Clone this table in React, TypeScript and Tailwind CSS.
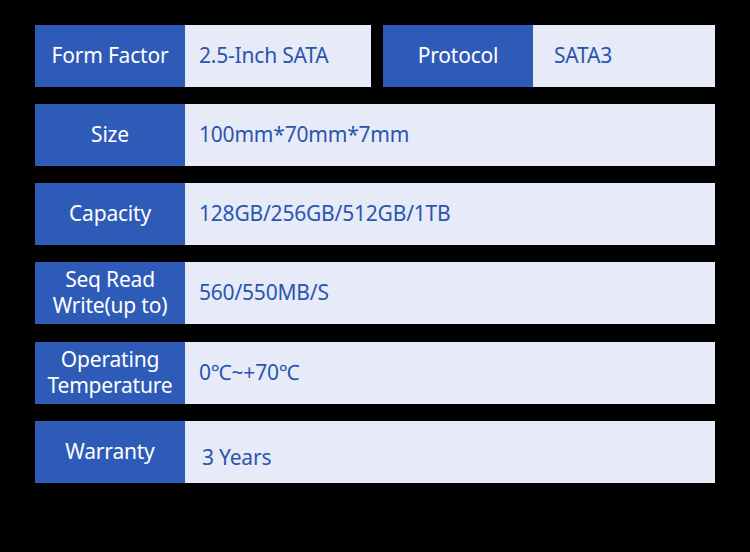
import React from 'react';

const label = 'bg-[#2f5bb8] text-white flex items-center justify-center text-center leading-[26px] pb-[3px]';
const value = 'bg-[#e6ebf7] text-[#2a55b2] flex items-center pl-[14px]';

const rows: { name: React.ReactNode; val: string; extra?: string; gap?: string }[] = [
  { name: 'Size', val: '100mm*70mm*7mm' },
  { name: 'Capacity', val: '128GB/256GB/512GB/1TB' },
  { name: <>Seq Read<br />Write(up to)</>, val: '560/550MB/S' },
  { name: <>Operating<br />Temperature</>, val: '0℃~+70℃', gap: 'mt-[1px]' },
  { name: 'Warranty', val: '3 Years', extra: 'pt-[12px] pl-[17px]' },
];

export default function App() {
  return (
    <div className="w-[750px] h-[552px] bg-black pt-[25px] pl-[35px] text-[21px] tracking-[-0.2px] font-['Noto_Sans',sans-serif]">
      <div className="flex flex-col gap-[17px] w-[680px]">
        <div className="flex h-[62px] gap-[12px]">
          <div className="flex w-[336px]">
            <div className={`${label} w-[150px]`}>Form Factor</div>
            <div className={`${value} flex-1`}>2.5-Inch SATA</div>
          </div>
          <div className="flex flex-1">
            <div className={`${label} w-[150px]`}>Protocol</div>
            <div className={`${value} flex-1 pl-[21px]`}>SATA3</div>
          </div>
        </div>
        {rows.map((r, i) => (
          <div key={i} className={`flex h-[62px] ${r.gap ?? ''}`}>
            <div className={`${label} w-[150px]`}>{r.name}</div>
            <div className={`${value} flex-1 ${r.extra ?? ''}`}>{r.val}</div>
          </div>
        ))}
      </div>
    </div>
  );
}
